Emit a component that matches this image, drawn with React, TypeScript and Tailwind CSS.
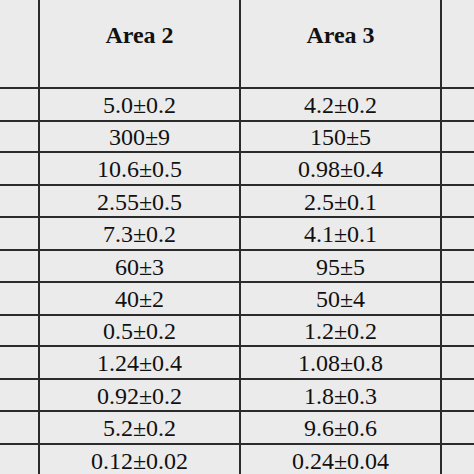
const rows: { a: string; b: string; h: string }[] = [
  { a: "5.0±0.2", b: "4.2±0.2", h: "h-[33px]" },
  { a: "300±9", b: "150±5", h: "h-[31px]" },
  { a: "10.6±0.5", b: "0.98±0.4", h: "h-[33px]" },
  { a: "2.55±0.5", b: "2.5±0.1", h: "h-[32px]" },
  { a: "7.3±0.2", b: "4.1±0.1", h: "h-[33px]" },
  { a: "60±3", b: "95±5", h: "h-[32px]" },
  { a: "40±2", b: "50±4", h: "h-[33px]" },
  { a: "0.5±0.2", b: "1.2±0.2", h: "h-[31px]" },
  { a: "1.24±0.4", b: "1.08±0.8", h: "h-[33px]" },
  { a: "0.92±0.2", b: "1.8±0.3", h: "h-[32px]" },
  { a: "5.2±0.2", b: "9.6±0.6", h: "h-[33px]" },
  { a: "0.12±0.02", b: "0.24±0.04", h: "h-[33px]" },
];

export default function App() {
  return (
    <div
      className="w-[474px] h-[474px] overflow-hidden bg-[#ebebeb] text-[#111]"
      style={{ fontFamily: '"Liberation Serif", "Times New Roman", serif' }}
    >
      {/* Header */}
      <div className="flex h-[89px] border-b-2 border-[#2b2b2b]">
        <div className="w-[40px] shrink-0 border-r-2 border-[#2b2b2b]" />
        <div className="w-[201px] shrink-0 border-r-2 border-[#2b2b2b] flex justify-center pt-[20px]">
          <span className="text-[24px] font-bold leading-[30px]">Area 2</span>
        </div>
        <div className="w-[201px] shrink-0 border-r-2 border-[#2b2b2b] flex justify-center pt-[20px]">
          <span className="text-[24px] font-bold leading-[30px]">Area 3</span>
        </div>
        <div className="flex-1" />
      </div>

      {/* Data rows */}
      {rows.map((r, i) => (
        <div key={i} className={`flex ${r.h} border-b-2 border-[#2b2b2b]`}>
          <div className="w-[40px] shrink-0 border-r-2 border-[#2b2b2b]" />
          <div className="w-[201px] shrink-0 border-r-2 border-[#2b2b2b] flex items-center justify-center pt-[1px]">
            <span className="text-[24px] leading-none">{r.a}</span>
          </div>
          <div className="w-[201px] shrink-0 border-r-2 border-[#2b2b2b] flex items-center justify-center pt-[1px]">
            <span className="text-[24px] leading-none">{r.b}</span>
          </div>
          <div className="flex-1" />
        </div>
      ))}
    </div>
  );
}
